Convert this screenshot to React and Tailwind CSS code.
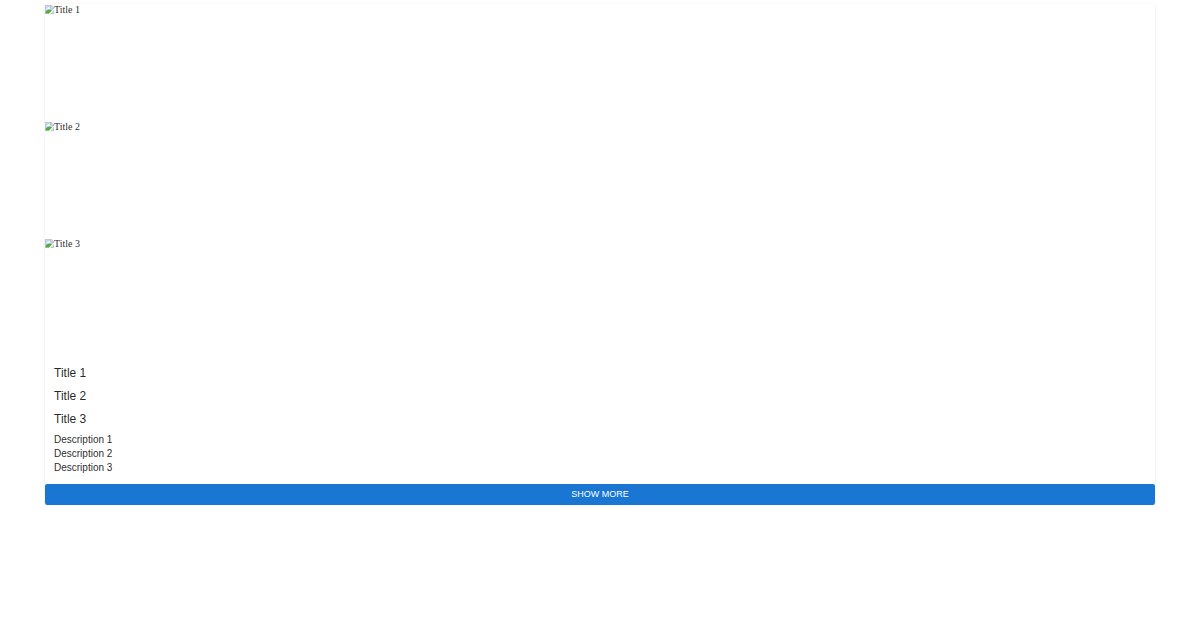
const items = [
  { title: "Title 1", description: "Description 1" },
  { title: "Title 2", description: "Description 2" },
  { title: "Title 3", description: "Description 3" },
];

function MissingImageIcon() {
  return (
    <svg viewBox="0 0 16 16" className="mt-px size-[9px] shrink-0" aria-hidden="true">
      <path d="M0.5 0.5H10.5L15.5 5.5V7L7 15.5H0.5Z" fill="#c3d9f7" />
      <path d="M3 7a2 2 0 0 1 2-2 2 2 0 0 1 3.500 0 1.500 1.500 0 0 1 1 2z" fill="#fff" />
      <path d="M1 15V12C3 9.500 6 8 9.500 8L13 10L8 15Z" fill="#4fae35" />
      <path d="M15.500 6.500V9L9 15.500H6.500Z" fill="#fff" />
      <path d="M15.500 9.500V15.500H9.500Z" fill="#c3d9f7" />
      <path d="M7 15.500H0.500V0.500H10.500L15.500 5.500V7M15.500 9.500V15.500H9.500" fill="none" stroke="#a5a5a5" />
      <path d="M10.500 0.500V5.500H15.500Z" fill="#f4f4f4" stroke="#a5a5a5" />
    </svg>
  );
}

function MediaSlot({ title }) {
  return (
    <div
      role="img"
      aria-label={title}
      className="flex h-[117px] items-start font-['Liberation_Serif',serif] text-[10px] leading-[11px]"
    >
      <MissingImageIcon />
      <span>{title}</span>
    </div>
  );
}

export default function App() {
  return (
    <main className="px-[45px] pt-1 font-['Liberation_Sans',Arial,sans-serif] text-black/87">
      <article className="overflow-hidden rounded-[2px] bg-white shadow-[0_1px_1px_rgba(0,0,0,0.2),0_0_2px_rgba(0,0,0,0.08)]">
        {items.map((item) => (
          <MediaSlot key={item.title} title={item.title} />
        ))}
        <div className="p-[9px]">
          {items.map((item) => (
            <h2 key={item.title} className="mb-1 text-[12px] leading-[19px]">
              {item.title}
            </h2>
          ))}
          {items.map((item) => (
            <p key={item.description} className="text-[10px] leading-[14px]">
              {item.description}
            </p>
          ))}
        </div>
        <button
          type="button"
          className="block w-full rounded-[2px] bg-[#1976d2] text-center text-[9px] leading-[21px] text-white uppercase"
        >
          Show more
        </button>
      </article>
    </main>
  );
}
